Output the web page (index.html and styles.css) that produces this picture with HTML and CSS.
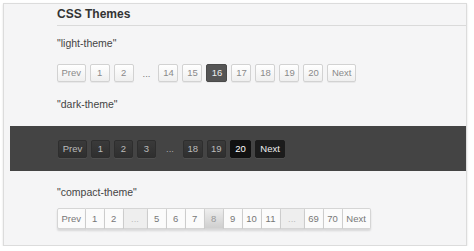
FILE: index.html
```html
<!DOCTYPE html>
<html lang="en">
<head>
<meta charset="utf-8">
<title>CSS Themes</title>
<link rel="stylesheet" href="styles.css">
</head>
<body>
<div class="panel">
  <div class="inner">
    <h2 class="title">CSS Themes</h2>
    <p class="label">"light-theme"</p>
    <div class="pager light">
      <a class="btn">Prev</a><a class="btn">1</a><a class="btn">2</a>
      <span class="gap">...</span>
      <a class="btn">14</a><a class="btn">15</a><a class="btn current">16</a><a class="btn">17</a><a class="btn">18</a><a class="btn">19</a><a class="btn">20</a><a class="btn">Next</a>
    </div>
    <p class="label dark-label">"dark-theme"</p>
  </div>
  <div class="band">
    <div class="pager dark">
      <a class="btn">Prev</a><a class="btn">1</a><a class="btn">2</a><a class="btn">3</a>
      <span class="gap">...</span>
      <a class="btn">18</a><a class="btn">19</a><a class="btn current">20</a><a class="btn">Next</a>
    </div>
  </div>
  <div class="inner">
    <p class="label compact-label">"compact-theme"</p>
    <div class="pager compact">
      <a class="btn">Prev</a><a class="btn">1</a><a class="btn">2</a><span class="btn dots">...</span><a class="btn">5</a><a class="btn">6</a><a class="btn">7</a><a class="btn current">8</a><a class="btn">9</a><a class="btn">10</a><a class="btn">11</a><span class="btn dots">...</span><a class="btn">69</a><a class="btn">70</a><a class="btn">Next</a>
    </div>
  </div>
</div>
</body>
</html>
```

FILE: styles.css
```css
body { margin: 0; background: #fff; font-family: "Liberation Sans", Arial, sans-serif; }
.panel {
  margin: 3px 7px 0 3px;
  height: 243px;
  box-sizing: border-box;
  border: 1px solid #dcdcdc;
  background: #f5f5f6;
  box-shadow: 0 1px 2px rgba(0,0,0,.12);
  overflow: hidden;
}
.inner { padding-left: 53px; }
.title {
  margin: 3px 0 0;
  padding-bottom: 3px;
  font-size: 12px;
  font-weight: bold;
  color: #333;
  border-bottom: 1px solid #dadada;
  line-height: 15px;
}
.label { margin: 11px 0 0; font-size: 10.5px; color: #444; line-height: 13px; }
.dark-label { margin-top: 16px; }
.compact-label { margin-top: 15px; }

.pager { display: flex; align-items: center; font-size: 9.5px; }
.pager .btn {
  display: block;
  box-sizing: border-box;
  height: 18px;
  line-height: 16px;
  min-width: 19px;
  padding: 0 3.5px;
  text-align: center;
  border-radius: 2px;
}
.pager .gap { padding: 0 4px 0 5px; }

.light { margin-top: 14px; gap: 4px; }
.light .btn {
  min-width: 20px;
  border: 1px solid #d2d2d2;
  background: linear-gradient(#fff, #efefef);
  color: #8a8a8a;
  box-shadow: 0 1px 0 rgba(0,0,0,.05);
}
.light .btn.current { background: #555; border-color: #4a4a4a; color: #eee; min-width: 21px; }
.light .gap { color: #777; }

.band {
  margin: 15px 0 0 6px;
  height: 45px;
  background: #444;
  display: flex;
  align-items: center;
  padding-left: 48px;
}
.dark { gap: 4px; }
.dark .btn {
  border: 1px solid #2e2e2e;
  background: linear-gradient(#3a3a3a, #2f2f2f);
  color: #bbb;
  box-shadow: 0 1px 0 rgba(255,255,255,.06);
}
.dark .btn:first-child { min-width: 29px; }
.dark .btn.current { background: #111; border-color: #111; color: #fff; min-width: 21px; }
.dark .btn:last-child { color: #eee; background: #1c1c1c; border-color: #1c1c1c; min-width: 30px; }
.dark .gap { color: #aaa; padding: 0 5px 0 6px; }

.compact { margin-top: 9px; }
.compact .btn {
  height: 21px;
  line-height: 19px;
  min-width: 19px;
  padding: 0 3.5px;
  border: 1px solid #d5d5d5;
  border-left: none;
  border-radius: 0;
  background: #fbfbfb;
  color: #777;
  box-shadow: 0 2px 2px rgba(0,0,0,.12);
}
.compact .btn:first-child { border-left: 1px solid #d5d5d5; border-radius: 2px 0 0 2px; }
.compact .btn:last-child { border-radius: 0 2px 2px 0; min-width: 28px; }
.compact .dots { width: 24px; color: #bbb; background: #eee; }
.compact .current { background: linear-gradient(#eee, #cfcfcf); color: #999; }
```
